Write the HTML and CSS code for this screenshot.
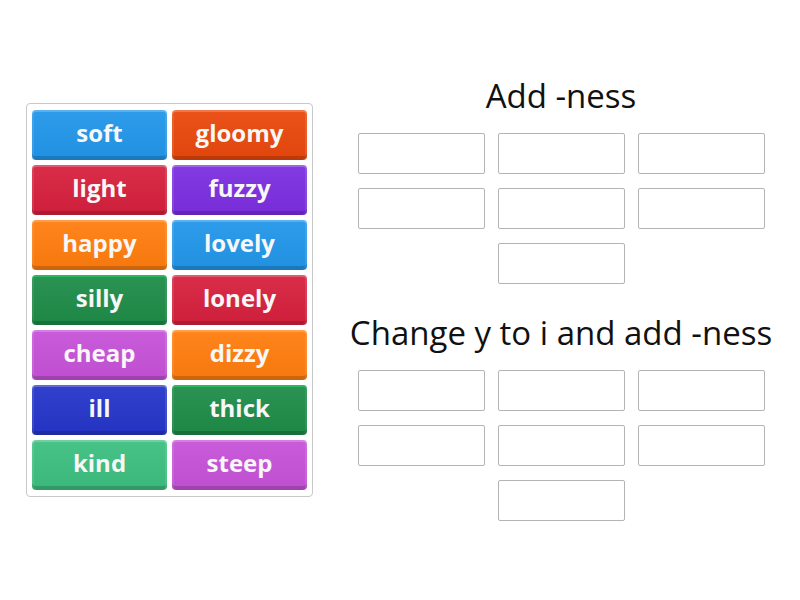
FILE: index.html
```html
<!DOCTYPE html>
<html lang="en">
<head>
<meta charset="utf-8">
<title>Group sort</title>
<link rel="stylesheet" href="styles.css">
</head>
<body>
<main class="stage">
  <section class="bank">
    <div class="tile blue">soft</div>
    <div class="tile redorange">gloomy</div>
    <div class="tile red">light</div>
    <div class="tile purple">fuzzy</div>
    <div class="tile orange">happy</div>
    <div class="tile blue">lovely</div>
    <div class="tile green">silly</div>
    <div class="tile red">lonely</div>
    <div class="tile pink">cheap</div>
    <div class="tile orange">dizzy</div>
    <div class="tile indigo">ill</div>
    <div class="tile green">thick</div>
    <div class="tile mint">kind</div>
    <div class="tile pink">steep</div>
  </section>
  <section class="groups">
    <div class="group">
      <h2 class="group-title">Add -ness</h2>
      <div class="slots">
        <div class="slot"></div><div class="slot"></div><div class="slot"></div>
        <div class="slot"></div><div class="slot"></div><div class="slot"></div>
        <div class="slot slot-mid"></div>
      </div>
    </div>
    <div class="group">
      <h2 class="group-title">Change y to i and add -ness</h2>
      <div class="slots">
        <div class="slot"></div><div class="slot"></div><div class="slot"></div>
        <div class="slot"></div><div class="slot"></div><div class="slot"></div>
        <div class="slot slot-mid"></div>
      </div>
    </div>
  </section>
</main>
</body>
</html>
```
FILE: styles.css
```css
html, body {
  margin: 0;
  padding: 0;
  background: #ffffff;
}

body {
  font-family: "Open Sans", "Noto Sans", "DejaVu Sans", sans-serif;
  width: 800px;
  height: 600px;
  overflow: hidden;
}

.stage {
  display: flex;
  align-items: flex-start;
  padding: 73px 0 0 26px;
}

.bank {
  margin-top: 30px;
  width: 275px;
  display: grid;
  grid-template-columns: 135px 135px;
  grid-auto-rows: 50px;
  gap: 5px;
  padding: 6px 5px 6px 5px;
  border: 1px solid #c8c8c8;
  border-radius: 4px;
}

.tile {
  display: flex;
  align-items: center;
  justify-content: center;
  padding-bottom: 5px;
  box-sizing: border-box;
  border-radius: 4px;
  color: #f7f7f7;
  font-size: 24px;
  font-weight: 700;
  line-height: 1;
  background-image: linear-gradient(rgba(255, 255, 255, 0.06), rgba(0, 0, 0, 0.04));
  box-shadow:
    inset 0 2px 0 rgba(255, 255, 255, 0.22),
    inset 2px 0 0 rgba(255, 255, 255, 0.10),
    inset -2px 0 0 rgba(255, 255, 255, 0.10),
    inset 0 -4px 0 rgba(0, 0, 0, 0.16);
}

.blue { background-color: #2196e9; }
.redorange { background-color: #e9480c; }
.red { background-color: #d6203d; }
.purple { background-color: #7c2ee0; }
.orange { background-color: #ff7d0e; }
.green {
  background-color: #1e8c48;
  box-shadow:
    inset 0 2px 0 #2bb85e,
    inset 2px 0 0 rgba(255, 255, 255, 0.08),
    inset -2px 0 0 rgba(255, 255, 255, 0.08),
    inset 0 -4px 0 rgba(0, 0, 0, 0.16);
}
.pink { background-color: #c652d8; }
.indigo { background-color: #2535c9; }
.mint { background-color: #3dbf80; }

.groups {
  margin-left: 33px;
  width: 430px;
  display: flex;
  flex-direction: column;
  align-items: center;
  gap: 26px;
}

.group {
  display: flex;
  flex-direction: column;
  align-items: center;
}

.group-title {
  margin: 0 0 15px 0;
  font-size: 33px;
  font-weight: 400;
  line-height: 45px;
  color: #111111;
  white-space: nowrap;
}

.slots {
  display: grid;
  grid-template-columns: repeat(3, 127px);
  grid-auto-rows: 41px;
  column-gap: 13px;
  row-gap: 14px;
}

.slot {
  box-sizing: border-box;
  border: 1px solid #b4b4b4;
  border-radius: 2px;
  background: #ffffff;
}

.slot-mid {
  grid-column: 2;
}
```
